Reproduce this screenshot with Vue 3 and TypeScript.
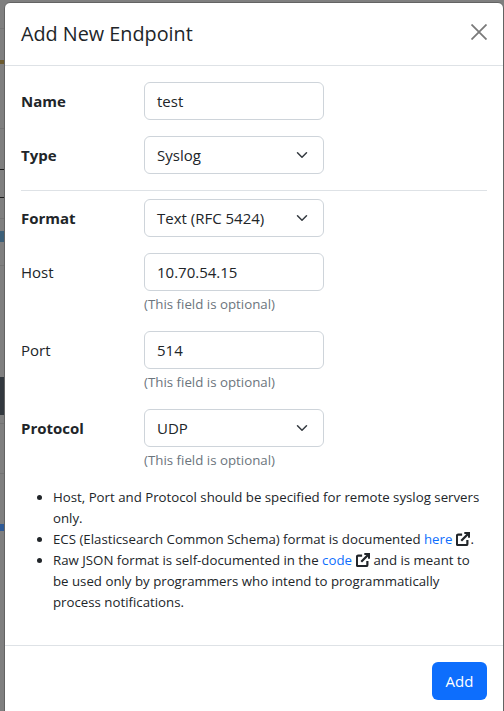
<script setup lang="ts">
interface Field {
  label: string
  value: string
  bold: boolean
  select: boolean
  optional: boolean
}
const top: Field[] = [
  { label: 'Name', value: 'test', bold: true, select: false, optional: false },
  { label: 'Type', value: 'Syslog', bold: true, select: true, optional: false },
]
const rest: Field[] = [
  { label: 'Format', value: 'Text (RFC 5424)', bold: true, select: true, optional: false },
  { label: 'Host', value: '10.70.54.15', bold: false, select: false, optional: true },
  { label: 'Port', value: '514', bold: false, select: false, optional: true },
  { label: 'Protocol', value: 'UDP', bold: true, select: true, optional: true },
]
const marks = [
  { y: 28, h: 1, c: '#747474' },
  { y: 60, h: 4, c: '#6b5a2e' },
  { y: 128, h: 1, c: '#737373' },
  { y: 169, h: 1, c: '#1c1c1c' },
  { y: 197, h: 1, c: '#1c1c1c' },
  { y: 218, h: 1, c: '#737373' },
  { y: 231, h: 11, c: '#3c5f78' },
  { y: 265, h: 1, c: '#737373' },
  { y: 377, h: 38, c: '#32383e' },
  { y: 423, h: 1, c: '#737373' },
  { y: 473, h: 1, c: '#737373' },
  { y: 524, h: 7, c: '#2f5a96' },
]
</script>

<template>
  <div class="page">
    <span
      v-for="m in marks"
      :key="m.y"
      class="mark"
      :style="{ top: m.y + 'px', height: m.h + 'px', background: m.c }"
    ></span>
    <div class="modal">
      <header class="head">
        <h5>Add New Endpoint</h5>
        <svg class="close" viewBox="0 0 16 16" width="16" height="16" aria-label="Close">
          <path d="M.5.5l15 15M15.500.5l-15 15" stroke="#7a7a7a" stroke-width="1.8" fill="none" />
        </svg>
      </header>
      <div class="body">
        <div v-for="f in top" :key="f.label" class="row">
          <label :class="{ bold: f.bold }">{{ f.label }}</label>
          <div class="control">
            <div class="input">
              <span>{{ f.value }}</span>
              <svg v-if="f.select" class="chev" viewBox="0 0 16 16" width="12" height="12"><path d="M2 5l6 6 6-6" fill="none" stroke="#343a40" stroke-width="2" stroke-linecap="round" stroke-linejoin="round"/></svg>
            </div>
          </div>
        </div>
        <hr />
        <div v-for="f in rest" :key="f.label" class="row">
          <label :class="{ bold: f.bold }">{{ f.label }}</label>
          <div class="control">
            <div class="input">
              <span>{{ f.value }}</span>
              <svg v-if="f.select" class="chev" viewBox="0 0 16 16" width="12" height="12"><path d="M2 5l6 6 6-6" fill="none" stroke="#343a40" stroke-width="2" stroke-linecap="round" stroke-linejoin="round"/></svg>
            </div>
            <small v-if="f.optional">(This field is optional)</small>
          </div>
        </div>
        <ul>
          <li>Host, Port and Protocol should be specified for remote syslog servers only.</li>
          <li>ECS (Elasticsearch Common Schema) format is documented <a>here</a><svg class="ext" viewBox="0 0 16 16" width="14" height="14"><path d="M7 3H2.500A1.500 1.500 0 0 0 1 4.500v9A1.500 1.500 0 0 0 2.500 15h9a1.500 1.500 0 0 0 1.500-1.500V9M6 10L15 1M9.500 1H15v5.500" fill="none" stroke="#212529" stroke-width="2.500"/></svg>.</li>
          <li>Raw JSON format is self-documented in the <a>code</a><svg class="ext" viewBox="0 0 16 16" width="14" height="14"><path d="M7 3H2.500A1.500 1.500 0 0 0 1 4.500v9A1.500 1.500 0 0 0 2.500 15h9a1.500 1.500 0 0 0 1.500-1.500V9M6 10L15 1M9.500 1H15v5.500" fill="none" stroke="#212529" stroke-width="2.500"/></svg> and is meant to be used only by programmers who intend to programmatically process notifications.</li>
        </ul>
      </div>
      <footer class="foot">
        <button type="button">Add</button>
      </footer>
    </div>
  </div>
</template>

<style>
html, body { margin: 0; overflow: hidden; }
</style>

<style scoped>
.page {
  position: relative;
  width: 504px;
  height: 711px;
  overflow: hidden;
  background: #7f7f7f;
  font-family: "Open Sans", "Noto Sans", sans-serif;
  color: #212529;
  font-size: 15px;
}
.mark { position: absolute; left: 0; width: 4px; }
.modal {
  position: absolute;
  left: 4px;
  top: 2px;
  width: 498px;
  height: 720px;
  background: #fff;
  border: 1px solid #636363;
  border-radius: 6px 6px 0 0;
}
.head {
  height: 63px;
  box-sizing: border-box;
  border-bottom: 1px solid #dee2e6;
  padding: 0 16px;
  display: flex;
  align-items: center;
  justify-content: space-between;
}
h5 { margin: 0; font-size: 19.8px; font-weight: 500; line-height: 62px; }
.close { margin-top: -5px; }
.body { padding: 16px 16px 0; }
.row { display: flex; margin-bottom: 16px; }
label { width: 123px; height: 38px; line-height: 38px; flex: none; }
.bold { font-weight: 700; }
.control { width: 180px; }
.input {
  height: 38px;
  box-sizing: border-box;
  border: 1px solid #ced4da;
  border-radius: 6px;
  padding: 0 12px;
  display: flex;
  align-items: center;
  justify-content: space-between;
}
.chev { margin-right: 3px; flex: none; }
small { display: block; color: #6c757d; font-size: 13.3px; line-height: 20px; margin-top: 3px; margin-bottom: 1px; }
hr { border: 0; border-top: 1px solid #dee2e6; margin: 0 0 8px; }
ul { margin: 0; padding: 0 0 0 32px; font-size: 13.25px; line-height: 21px; }
a { color: #0d6efd; }
.ext { vertical-align: -2px; margin-left: 4px; }
.foot {
  position: absolute;
  left: 0;
  right: 0;
  top: 642px;
  border-top: 1px solid #dee2e6;
  padding: 16px;
  display: flex;
  justify-content: flex-end;
}
button {
  width: 55px;
  height: 38px;
  border: 0;
  border-radius: 6px;
  background: #0d6efd;
  color: #fff;
  font: inherit;
}
</style>
